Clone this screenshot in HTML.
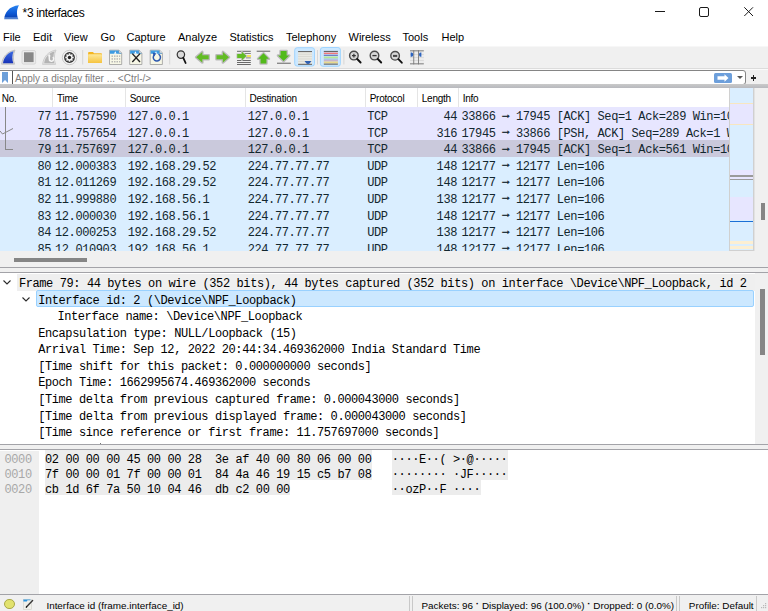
<!DOCTYPE html><html><head><meta charset="utf-8"><style>
*{box-sizing:border-box;margin:0;padding:0}
html,body{width:768px;height:611px;overflow:hidden;background:#fff}
body{position:relative;font-family:"Liberation Sans",sans-serif;color:#000}
.a{position:absolute}
.m{font-family:"Liberation Mono",monospace;font-size:12px;letter-spacing:-0.4px;white-space:pre;position:absolute}
.u{font-family:"Liberation Sans",sans-serif;white-space:pre;position:absolute}
svg{position:absolute;overflow:visible}
</style></head><body>
<svg style="left:4px;top:5px" width="15" height="15" viewBox="0 0 15 15">
<defs><linearGradient id="fin" gradientUnits="userSpaceOnUse" x1="0" y1="0" x2="0" y2="14.3"><stop offset="0" stop-color="#2a86f2"/><stop offset="0.55" stop-color="#0e5ad6"/><stop offset="0.86" stop-color="#0a44b8"/><stop offset="0.88" stop-color="#5a8ad8"/><stop offset="1" stop-color="#4a78c8"/></linearGradient></defs>
<path d="M0.2 14.3 C0.6 7.5 5 1.2 15 0.2 C12.6 4 12.3 9.5 14.4 14.3 Z" fill="url(#fin)"/>
</svg>
<div class="u" style="left:22.6px;top:5.8px;font-size:12px;letter-spacing:-0.38px;line-height:14px">*3 interfaces</div>
<div class="a" style="left:655px;top:11px;width:10px;height:1px;background:#1a1a1a"></div>
<div class="a" style="left:699px;top:7px;width:10px;height:10px;border:1px solid #1a1a1a;border-radius:2px"></div>
<svg style="left:744px;top:7.3px" width="10" height="10" viewBox="0 0 10 10"><path d="M0.3 0.3 L9 9 M9 0.3 L0.3 9" stroke="#1a1a1a" stroke-width="1"/></svg>
<div class="u" style="left:3px;top:30px;font-size:11px;line-height:14px">File</div>
<div class="u" style="left:33px;top:30px;font-size:11px;line-height:14px">Edit</div>
<div class="u" style="left:64px;top:30px;font-size:11px;line-height:14px">View</div>
<div class="u" style="left:100.5px;top:30px;font-size:11px;line-height:14px">Go</div>
<div class="u" style="left:126.5px;top:30px;font-size:11px;line-height:14px">Capture</div>
<div class="u" style="left:178px;top:30px;font-size:11px;line-height:14px">Analyze</div>
<div class="u" style="left:229.5px;top:30px;font-size:11px;line-height:14px">Statistics</div>
<div class="u" style="left:286px;top:30px;font-size:11px;line-height:14px">Telephony</div>
<div class="u" style="left:348.5px;top:30px;font-size:11px;line-height:14px">Wireless</div>
<div class="u" style="left:402.5px;top:30px;font-size:11px;line-height:14px">Tools</div>
<div class="u" style="left:441.5px;top:30px;font-size:11px;line-height:14px">Help</div>
<div class="a" style="left:0;top:46px;width:768px;height:23px;background:#f0f0f0"></div>
<div class="a" style="left:0;top:46px;width:768px;height:1px;background:#f7f7f7"></div>
<div class="a" style="left:0;top:67.8px;width:768px;height:1px;background:#dcdcdc"></div>
<svg style="left:0;top:0" width="430" height="70" viewBox="0 0 430 70">
<defs>
<linearGradient id="tbfin" x1="0" y1="0" x2="0" y2="1"><stop offset="0" stop-color="#3c6be0"/><stop offset="1" stop-color="#1632b8"/></linearGradient>
<linearGradient id="fold" x1="0" y1="0" x2="0" y2="1"><stop offset="0" stop-color="#fde89a"/><stop offset="1" stop-color="#f6c440"/></linearGradient>
</defs>
<!-- start fin -->
<path d="M1.6 64.2 C2.5 57 7 51.5 15 50.1 C13 54.5 12.8 59.5 14.6 64.2 Z" fill="#d8d8d8" stroke="#bdbdbd" stroke-width="0.8"/>
<path d="M3 63.2 C3.8 57.5 7.8 52.5 13.6 51.3 C12 55 11.9 59.5 13.3 63.2 Z" fill="url(#tbfin)"/>
<!-- stop -->
<rect x="22" y="50.5" width="13.6" height="13.6" rx="1.5" fill="#ebebeb" stroke="#d2d2d2" stroke-width="0.8"/>
<rect x="24" y="52.3" width="9.6" height="9.8" fill="#878787"/>
<!-- restart fin -->
<path d="M42.6 64.4 C43.5 57 48 51.5 56 50 C54 54.5 53.8 59.5 55.6 64.4 Z" fill="#e4e4e4" stroke="#c8c8c8" stroke-width="0.8"/>
<path d="M44.2 63.2 C45 57.5 49 52.5 54.6 51.5 C53 55 52.9 59.5 54.3 63.2 Z" fill="#b4b4b4"/>
<path d="M49.3 55.6 L49.3 58.6 A2.2 2.2 0 1 0 52.8 57.2" fill="none" stroke="#f6f6f6" stroke-width="1.5"/>
<path d="M47.8 56.2 L49.3 54 L50.8 56.2 Z" fill="#f6f6f6"/>
<!-- options gear -->
<circle cx="69.5" cy="57.5" r="7.2" fill="#f2f2f2" stroke="#c4c4c4" stroke-width="0.9"/>
<circle cx="69.5" cy="57.5" r="5.4" fill="#353535"/>
<g fill="#f4f4f4">
<circle cx="69.5" cy="57.5" r="3.1"/>
<rect x="68.7" y="53.3" width="1.6" height="8.4"/>
<rect x="65.3" y="56.7" width="8.4" height="1.6"/>
<rect x="68.7" y="53.3" width="1.6" height="8.4" transform="rotate(45 69.5 57.5)"/>
<rect x="68.7" y="53.3" width="1.6" height="8.4" transform="rotate(-45 69.5 57.5)"/>
</g>
<circle cx="69.5" cy="57.5" r="1.7" fill="#222"/>
<!-- separators -->
<rect x="82.2" y="50" width="1" height="14.5" fill="#d6d6d6"/>
<rect x="169.2" y="50" width="1" height="14.5" fill="#d6d6d6"/>
<rect x="317" y="50" width="1" height="14.5" fill="#d6d6d6"/>
<rect x="343.4" y="50" width="1" height="14.5" fill="#d6d6d6"/>
<!-- folder -->
<path d="M88.1 53 Q88.1 52 89 52 L93 52 L94 53.3 L101.2 53.3 Q101.9 53.3 101.9 54 L101.9 62.2 Q101.9 62.9 101.2 62.9 L88.8 62.9 Q88.1 62.9 88.1 62.2 Z" fill="#f4b622"/>
<path d="M88.1 55 Q88.1 54.3 88.8 54.3 L101.2 54.3 Q101.9 54.3 101.9 55 L101.9 62.2 Q101.9 62.9 101.2 62.9 L88.8 62.9 Q88.1 62.9 88.1 62.2 Z" fill="url(#fold)"/>
<!-- doc template -->
<g>
<path d="M109.5 50.2 L119 50.2 L121.7 53 L121.7 64.5 L109.5 64.5 Z" fill="#f7f7e6" stroke="#9a9a9a" stroke-width="0.8"/>
<path d="M109.9 50.6 L118.8 50.6 L121.3 53.1 L121.3 53.8 L109.9 53.8 Z" fill="#3d9ce2"/>
<path d="M114 53.8 L115.3 51.3 L116.5 53.8 Z" fill="#fff"/>
<path d="M119 50.2 L119 53 L121.7 53" fill="#dfe8f0" stroke="#9a9a9a" stroke-width="0.5"/>
</g>
<g fill="#b0b0b0">
<rect x="111.5" y="55.5" width="1.5" height="1.3"/><rect x="114" y="55.5" width="1.5" height="1.3"/><rect x="116.5" y="55.5" width="1.5" height="1.3"/><rect x="119" y="55.5" width="1.2" height="1.3"/>
<rect x="111.5" y="58.3" width="1.5" height="1.3"/><rect x="114" y="58.3" width="1.5" height="1.3"/><rect x="116.5" y="58.3" width="1.5" height="1.3"/><rect x="119" y="58.3" width="1.2" height="1.3"/>
<rect x="111.5" y="61.1" width="1.5" height="1.3"/><rect x="114" y="61.1" width="1.5" height="1.3"/><rect x="116.5" y="61.1" width="1.5" height="1.3"/><rect x="119" y="61.1" width="1.2" height="1.3"/>
</g>
<g transform="translate(20.2 0)">
<path d="M109.5 50.2 L119 50.2 L121.7 53 L121.7 64.5 L109.5 64.5 Z" fill="#f7f7e6" stroke="#9a9a9a" stroke-width="0.8"/>
<path d="M109.9 50.6 L118.8 50.6 L121.3 53.1 L121.3 53.8 L109.9 53.8 Z" fill="#3d9ce2"/>
<path d="M114 53.8 L115.3 51.3 L116.5 53.8 Z" fill="#fff"/>
<path d="M119 50.2 L119 53 L121.7 53" fill="#dfe8f0" stroke="#9a9a9a" stroke-width="0.5"/>
</g>
<path d="M132.3 53.6 L140 62 M140 53.6 L132.3 62" stroke="#222" stroke-width="1.4"/>
<g transform="translate(40.7 0)">
<path d="M109.5 50.2 L119 50.2 L121.7 53 L121.7 64.5 L109.5 64.5 Z" fill="#f7f7e6" stroke="#9a9a9a" stroke-width="0.8"/>
<path d="M109.9 50.6 L118.8 50.6 L121.3 53.1 L121.3 53.8 L109.9 53.8 Z" fill="#3d9ce2"/>
<path d="M114 53.8 L115.3 51.3 L116.5 53.8 Z" fill="#fff"/>
<path d="M119 50.2 L119 53 L121.7 53" fill="#dfe8f0" stroke="#9a9a9a" stroke-width="0.5"/>
</g>
<path d="M158.5 54.2 A3.6 3.6 0 1 1 154.6 54.6" fill="none" stroke="#2b57ae" stroke-width="1.5"/>
<path d="M152.6 52.6 L156.4 53.4 L153.8 56.6 Z" fill="#2b57ae"/>
<!-- find -->
<circle cx="180.9" cy="54.6" r="3.7" fill="#dadada" stroke="#333" stroke-width="1.2"/>
<path d="M183.3 57.8 L185.6 63" stroke="#111" stroke-width="1.8" stroke-linecap="round"/>
<!-- back arrow -->
<path d="M196.2 57.2 L202.3 52 L202.3 55.2 L208.7 55.2 L208.7 59.2 L202.3 59.2 L202.3 62.4 Z" fill="#62bc24" stroke="#bababa" stroke-width="2.6" stroke-linejoin="round" paint-order="stroke"/>
<!-- forward arrow -->
<path d="M229 57.2 L222.9 52 L222.9 55.2 L216.5 55.2 L216.5 59.2 L222.9 59.2 L222.9 62.4 Z" fill="#62bc24" stroke="#bababa" stroke-width="2.6" stroke-linejoin="round" paint-order="stroke"/>
<!-- go to packet -->
<g fill="#6a6a6a">
<rect x="237" y="50.8" width="13.8" height="1"/>
<rect x="244" y="53" width="6.8" height="0.8"/>
<rect x="246" y="57.5" width="4.8" height="0.8"/>
<rect x="237" y="60" width="13.8" height="1"/>
<rect x="237" y="62" width="13.8" height="1"/>
<rect x="237" y="64" width="13.8" height="1"/>
</g>
<rect x="247" y="55.2" width="4" height="1.6" fill="#f3e23a"/>
<path d="M246.5 56 L241.8 51.8 L241.8 54 L237.2 54 L237.2 58 L241.8 58 L241.8 60.2 Z" fill="#62bc24" stroke="#c6c6c6" stroke-width="1.6" stroke-linejoin="round" paint-order="stroke"/>
<!-- first packet -->
<rect x="256.7" y="50.6" width="13.5" height="1.4" fill="#8a8a8a"/>
<path d="M263.5 53.3 L268.9 58.8 L266.4 58.8 L266.4 63.4 L260.6 63.4 L260.6 58.8 L258.1 58.8 Z" fill="#52ba1a" stroke="#bababa" stroke-width="2.6" stroke-linejoin="round" paint-order="stroke"/>
<!-- last packet -->
<path d="M283.6 61.1 L289.2 55.6 L286.6 55.6 L286.6 51 L280.6 51 L280.6 55.6 L278 55.6 Z" fill="#52ba1a" stroke="#bababa" stroke-width="2.6" stroke-linejoin="round" paint-order="stroke"/>
<rect x="277" y="62.6" width="13.8" height="1.4" fill="#8a8a8a"/>
<!-- autoscroll checked -->
<rect x="294.7" y="47.7" width="19.8" height="18.4" rx="2.5" fill="#cce8ff" stroke="#99d1ff" stroke-width="0.9"/>
<rect x="298.1" y="51.5" width="13.9" height="12.9" fill="#e9e9e3"/>
<g fill="#d4d4cc"><rect x="298.1" y="53.8" width="13.9" height="0.7"/><rect x="298.1" y="56.2" width="13.9" height="0.7"/><rect x="298.1" y="58.6" width="13.9" height="0.7"/><rect x="298.1" y="61" width="13.9" height="0.7"/></g>
<rect x="298.1" y="51" width="13.9" height="1.1" fill="#6a6a6a"/>
<rect x="298.1" y="63.8" width="13.9" height="1.1" fill="#6a6a6a"/>
<path d="M304.6 61.3 Q304.6 60.9 305 60.9 L311 60.9 Q311.4 60.9 311.1 61.6 L309.8 63.2 Q309.2 64 308 64 Q306.8 64 306.2 63.2 L304.9 61.6 Z" fill="#2f5fb0"/>
<!-- colorize checked -->
<rect x="320.4" y="47.5" width="20" height="18.8" rx="2.5" fill="#cce8ff" stroke="#99d1ff" stroke-width="0.9"/>
<rect x="323.8" y="50.9" width="14.1" height="1.1" fill="#666"/>
<rect x="323.8" y="52.6" width="14.1" height="1.5" fill="#f07878"/>
<rect x="323.8" y="54.7" width="14.1" height="1.3" fill="#6f80c8"/>
<rect x="323.8" y="56.5" width="14.1" height="2" fill="#b4e896"/>
<rect x="323.8" y="58.5" width="14.1" height="1.4" fill="#a9c2e6"/>
<rect x="323.8" y="59.9" width="14.1" height="1.6" fill="#c8b2cc"/>
<rect x="323.8" y="61.5" width="14.1" height="2" fill="#e8d88c"/>
<rect x="323.8" y="63.6" width="14.1" height="1.1" fill="#666"/>
<!-- zoom in -->
<circle cx="353.9" cy="55.6" r="4.3" fill="#d6d6d6" stroke="#4a4a4a" stroke-width="1.4"/>
<path d="M352 55.6 H355.8 M353.9 53.7 V57.5" stroke="#333" stroke-width="1.2"/>
<path d="M357.2 59 L360.6 62.5" stroke="#111" stroke-width="1.9" stroke-linecap="round"/>
<!-- zoom out -->
<circle cx="374.5" cy="55.6" r="4.3" fill="#d6d6d6" stroke="#4a4a4a" stroke-width="1.4"/>
<path d="M372.4 55.6 H376.6" stroke="#333" stroke-width="1.3"/>
<path d="M377.8 59 L381.2 62.5" stroke="#111" stroke-width="1.9" stroke-linecap="round"/>
<!-- zoom normal -->
<circle cx="395.1" cy="55.8" r="4.3" fill="#d6d6d6" stroke="#4a4a4a" stroke-width="1.4"/>
<rect x="393" y="54.9" width="4.2" height="2" fill="#444"/>
<path d="M398.4 59.2 L401.8 62.7" stroke="#111" stroke-width="1.9" stroke-linecap="round"/>
<!-- resize columns -->
<rect x="410" y="50.6" width="13.8" height="13.5" fill="#ececec"/>
<g fill="#d0d0d0"><rect x="410" y="54" width="13.8" height="0.6"/><rect x="410" y="57" width="13.8" height="0.6"/><rect x="410" y="60" width="13.8" height="0.6"/></g>
<rect x="410" y="50.2" width="13.8" height="1.2" fill="#8e8e8e"/>
<rect x="410" y="63.2" width="13.8" height="1.2" fill="#8e8e8e"/>
<rect x="413.3" y="50.2" width="0.9" height="14.2" fill="#7a7a7a"/>
<rect x="418" y="50.2" width="0.9" height="14.2" fill="#7a7a7a"/>
<path d="M410.6 52.4 L411.6 52.4 Q413.2 52.4 413.2 54.6 Q413.2 56.8 411.6 56.8 L410.6 56.8 Z" fill="#2c64c0"/>
<path d="M421.4 52.4 L420.6 52.4 Q419 52.4 419 54.6 Q419 56.8 420.6 56.8 L421.4 56.8 Z" fill="#2c64c0"/>
</svg>

<div class="a" style="left:0;top:68.8px;width:768px;height:19px;background:#f0f0f0"></div>
<div class="a" style="left:0;top:68.8px;width:768px;height:1px;background:#fafafa"></div>
<div class="a" style="left:-3px;top:70px;width:749px;height:15px;background:#fff;border:1px solid #858585;border-radius:3px"></div>
<div class="a" style="left:2px;top:72px;width:6px;height:11px;background:#6c9fd9;clip-path:polygon(0 0,100% 0,100% 100%,50% 72%,0 100%)"></div>
<div class="a" style="left:12px;top:71px;width:1px;height:14px;background:#555"></div>
<div class="u" style="left:15px;top:72.8px;font-size:10px;line-height:12px;color:#7c7c7c">Apply a display filter ... &lt;Ctrl-/&gt;</div>
<div class="a" style="left:714px;top:73px;width:18px;height:10px;background:#6d9fdb;border-radius:1.5px"></div>
<svg style="left:716px;top:73px" width="14" height="10" viewBox="0 0 14 10"><path d="M1.5 3.3 H8.5 V1.3 L12.5 5 L8.5 8.7 V6.7 H1.5 Z" fill="#fff"/></svg>
<div class="a" style="left:737px;top:76px;width:0;height:0;border-left:3px solid transparent;border-right:3px solid transparent;border-top:3px solid #555"></div>
<div class="a" style="left:750.6px;top:77.2px;width:5.8px;height:1.6px;background:#222"></div>
<div class="a" style="left:752.7px;top:75.1px;width:1.6px;height:5.8px;background:#222"></div>
<div class="a" style="left:0;top:83.7px;width:768px;height:4.3px;background:linear-gradient(#cacaca,#b8b9be)"></div>
<div class="a" style="left:0;top:88px;width:729px;height:163px;background:#fff;overflow:hidden">
<div class="u" style="left:1.7px;top:5.2px;font-size:10px;letter-spacing:-0.25px;line-height:12px">No.</div>
<div class="u" style="left:57px;top:5.2px;font-size:10px;letter-spacing:-0.25px;line-height:12px">Time</div>
<div class="u" style="left:129.7px;top:5.2px;font-size:10px;letter-spacing:-0.25px;line-height:12px">Source</div>
<div class="u" style="left:249.5px;top:5.2px;font-size:10px;letter-spacing:-0.25px;line-height:12px">Destination</div>
<div class="u" style="left:369.7px;top:5.2px;font-size:10px;letter-spacing:-0.25px;line-height:12px">Protocol</div>
<div class="u" style="left:421.8px;top:5.2px;font-size:10px;letter-spacing:-0.25px;line-height:12px">Length</div>
<div class="u" style="left:462.7px;top:5.2px;font-size:10px;letter-spacing:-0.25px;line-height:12px">Info</div>
<div class="a" style="left:52px;top:0;width:1px;height:19px;background:#e5e5e5"></div>
<div class="a" style="left:125px;top:0;width:1px;height:19px;background:#e5e5e5"></div>
<div class="a" style="left:245px;top:0;width:1px;height:19px;background:#e5e5e5"></div>
<div class="a" style="left:365px;top:0;width:1px;height:19px;background:#e5e5e5"></div>
<div class="a" style="left:417px;top:0;width:1px;height:19px;background:#e5e5e5"></div>
<div class="a" style="left:458px;top:0;width:1px;height:19px;background:#e5e5e5"></div>
<div class="a" style="left:0;top:19.10px;width:729px;height:17.07px;background:#e7e6ff"></div>
<div class="m" style="left:37.40px;top:22.10px;line-height:14px;color:#12272e">77</div>
<div class="m" style="left:55.00px;top:22.10px;line-height:14px;color:#12272e">11.757590</div>
<div class="m" style="left:127.70px;top:22.10px;line-height:14px;color:#12272e">127.0.0.1</div>
<div class="m" style="left:247.70px;top:22.10px;line-height:14px;color:#12272e">127.0.0.1</div>
<div class="m" style="left:367.20px;top:22.10px;line-height:14px;color:#12272e">TCP</div>
<div class="m" style="left:443.40px;top:22.10px;line-height:14px;color:#12272e">44</div>
<div class="m" style="left:461.50px;top:22.10px;line-height:14px;color:#12272e">33866 <span style="position:relative;top:-2.5px;-webkit-text-stroke:0.35px currentColor">→</span> 17945 [ACK] Seq=1 Ack=289 Win=10233 Len=0</div>
<div class="a" style="left:0;top:35.67px;width:729px;height:17.07px;background:#e7e6ff"></div>
<div class="m" style="left:37.40px;top:38.67px;line-height:14px;color:#12272e">78</div>
<div class="m" style="left:55.00px;top:38.67px;line-height:14px;color:#12272e">11.757654</div>
<div class="m" style="left:127.70px;top:38.67px;line-height:14px;color:#12272e">127.0.0.1</div>
<div class="m" style="left:247.70px;top:38.67px;line-height:14px;color:#12272e">127.0.0.1</div>
<div class="m" style="left:367.20px;top:38.67px;line-height:14px;color:#12272e">TCP</div>
<div class="m" style="left:436.60px;top:38.67px;line-height:14px;color:#12272e">316</div>
<div class="m" style="left:461.50px;top:38.67px;line-height:14px;color:#12272e">17945 <span style="position:relative;top:-2.5px;-webkit-text-stroke:0.35px currentColor">→</span> 33866 [PSH, ACK] Seq=289 Ack=1 Win=10233 Len=272</div>
<div class="a" style="left:0;top:52.24px;width:729px;height:17.07px;background:#cac9dc"></div>
<div class="m" style="left:37.40px;top:55.24px;line-height:14px;color:#12272e">79</div>
<div class="m" style="left:55.00px;top:55.24px;line-height:14px;color:#12272e">11.757697</div>
<div class="m" style="left:127.70px;top:55.24px;line-height:14px;color:#12272e">127.0.0.1</div>
<div class="m" style="left:247.70px;top:55.24px;line-height:14px;color:#12272e">127.0.0.1</div>
<div class="m" style="left:367.20px;top:55.24px;line-height:14px;color:#12272e">TCP</div>
<div class="m" style="left:443.40px;top:55.24px;line-height:14px;color:#12272e">44</div>
<div class="m" style="left:461.50px;top:55.24px;line-height:14px;color:#12272e">33866 <span style="position:relative;top:-2.5px;-webkit-text-stroke:0.35px currentColor">→</span> 17945 [ACK] Seq=1 Ack=561 Win=10229 Len=0</div>
<div class="a" style="left:0;top:68.81px;width:729px;height:17.07px;background:#daeeff"></div>
<div class="m" style="left:37.40px;top:71.81px;line-height:14px;color:#12272e">80</div>
<div class="m" style="left:55.00px;top:71.81px;line-height:14px;color:#12272e">12.000383</div>
<div class="m" style="left:127.70px;top:71.81px;line-height:14px;color:#12272e">192.168.29.52</div>
<div class="m" style="left:247.70px;top:71.81px;line-height:14px;color:#12272e">224.77.77.77</div>
<div class="m" style="left:367.20px;top:71.81px;line-height:14px;color:#12272e">UDP</div>
<div class="m" style="left:436.60px;top:71.81px;line-height:14px;color:#12272e">148</div>
<div class="m" style="left:461.50px;top:71.81px;line-height:14px;color:#12272e">12177 <span style="position:relative;top:-2.5px;-webkit-text-stroke:0.35px currentColor">→</span> 12177 Len=106</div>
<div class="a" style="left:0;top:85.38px;width:729px;height:17.07px;background:#daeeff"></div>
<div class="m" style="left:37.40px;top:88.38px;line-height:14px;color:#12272e">81</div>
<div class="m" style="left:55.00px;top:88.38px;line-height:14px;color:#12272e">12.011269</div>
<div class="m" style="left:127.70px;top:88.38px;line-height:14px;color:#12272e">192.168.29.52</div>
<div class="m" style="left:247.70px;top:88.38px;line-height:14px;color:#12272e">224.77.77.77</div>
<div class="m" style="left:367.20px;top:88.38px;line-height:14px;color:#12272e">UDP</div>
<div class="m" style="left:436.60px;top:88.38px;line-height:14px;color:#12272e">148</div>
<div class="m" style="left:461.50px;top:88.38px;line-height:14px;color:#12272e">12177 <span style="position:relative;top:-2.5px;-webkit-text-stroke:0.35px currentColor">→</span> 12177 Len=106</div>
<div class="a" style="left:0;top:101.95px;width:729px;height:17.07px;background:#daeeff"></div>
<div class="m" style="left:37.40px;top:104.95px;line-height:14px;color:#12272e">82</div>
<div class="m" style="left:55.00px;top:104.95px;line-height:14px;color:#12272e">11.999880</div>
<div class="m" style="left:127.70px;top:104.95px;line-height:14px;color:#12272e">192.168.56.1</div>
<div class="m" style="left:247.70px;top:104.95px;line-height:14px;color:#12272e">224.77.77.77</div>
<div class="m" style="left:367.20px;top:104.95px;line-height:14px;color:#12272e">UDP</div>
<div class="m" style="left:436.60px;top:104.95px;line-height:14px;color:#12272e">138</div>
<div class="m" style="left:461.50px;top:104.95px;line-height:14px;color:#12272e">12177 <span style="position:relative;top:-2.5px;-webkit-text-stroke:0.35px currentColor">→</span> 12177 Len=106</div>
<div class="a" style="left:0;top:118.52px;width:729px;height:17.07px;background:#daeeff"></div>
<div class="m" style="left:37.40px;top:121.52px;line-height:14px;color:#12272e">83</div>
<div class="m" style="left:55.00px;top:121.52px;line-height:14px;color:#12272e">12.000030</div>
<div class="m" style="left:127.70px;top:121.52px;line-height:14px;color:#12272e">192.168.56.1</div>
<div class="m" style="left:247.70px;top:121.52px;line-height:14px;color:#12272e">224.77.77.77</div>
<div class="m" style="left:367.20px;top:121.52px;line-height:14px;color:#12272e">UDP</div>
<div class="m" style="left:436.60px;top:121.52px;line-height:14px;color:#12272e">148</div>
<div class="m" style="left:461.50px;top:121.52px;line-height:14px;color:#12272e">12177 <span style="position:relative;top:-2.5px;-webkit-text-stroke:0.35px currentColor">→</span> 12177 Len=106</div>
<div class="a" style="left:0;top:135.09px;width:729px;height:17.07px;background:#daeeff"></div>
<div class="m" style="left:37.40px;top:138.09px;line-height:14px;color:#12272e">84</div>
<div class="m" style="left:55.00px;top:138.09px;line-height:14px;color:#12272e">12.000253</div>
<div class="m" style="left:127.70px;top:138.09px;line-height:14px;color:#12272e">192.168.29.52</div>
<div class="m" style="left:247.70px;top:138.09px;line-height:14px;color:#12272e">224.77.77.77</div>
<div class="m" style="left:367.20px;top:138.09px;line-height:14px;color:#12272e">UDP</div>
<div class="m" style="left:436.60px;top:138.09px;line-height:14px;color:#12272e">138</div>
<div class="m" style="left:461.50px;top:138.09px;line-height:14px;color:#12272e">12177 <span style="position:relative;top:-2.5px;-webkit-text-stroke:0.35px currentColor">→</span> 12177 Len=106</div>
<div class="a" style="left:0;top:151.66px;width:729px;height:17.07px;background:#daeeff"></div>
<div class="m" style="left:37.40px;top:154.66px;line-height:14px;color:#12272e">85</div>
<div class="m" style="left:55.00px;top:154.66px;line-height:14px;color:#12272e">12.010903</div>
<div class="m" style="left:127.70px;top:154.66px;line-height:14px;color:#12272e">192.168.56.1</div>
<div class="m" style="left:247.70px;top:154.66px;line-height:14px;color:#12272e">224.77.77.77</div>
<div class="m" style="left:367.20px;top:154.66px;line-height:14px;color:#12272e">UDP</div>
<div class="m" style="left:436.60px;top:154.66px;line-height:14px;color:#12272e">148</div>
<div class="m" style="left:461.50px;top:154.66px;line-height:14px;color:#12272e">12177 <span style="position:relative;top:-2.5px;-webkit-text-stroke:0.35px currentColor">→</span> 12177 Len=106</div>
<div class="a" style="left:5px;top:19px;width:1px;height:42px;background:#888"></div>
<div class="a" style="left:5px;top:60.5px;width:8px;height:1px;background:#888"></div>
<svg style="left:0;top:40px" width="14" height="8" viewBox="0 0 14 8"><path d="M0 3 L2.5 6 L13 0.5" stroke="#888" stroke-width="1" fill="none"/></svg>
</div>
<div class="a" style="left:729px;top:88px;width:25px;height:163px;background:#daeeff;border-left:1px solid #d0d0d0;border-right:1px solid #d0d0d0;border-bottom:1px solid #d0d0d0;overflow:hidden">
<div class="a" style="left:0;top:15px;width:25px;height:1px;background:#f8e6c0"></div>
<div class="a" style="left:0;top:16px;width:25px;height:19.5px;background:#e7e6ff"></div>
<div class="a" style="left:0;top:35.5px;width:25px;height:1px;background:#f8e6c0"></div>
<div class="a" style="left:0;top:82px;width:25px;height:6px;background:#e7e6ff"></div>
<div class="a" style="left:0;top:87px;width:25px;height:1.5px;background:#9a9a9a"></div>
<div class="a" style="left:0;top:88.5px;width:25px;height:2px;background:#e7e6ff"></div>
<div class="a" style="left:0;top:90.5px;width:25px;height:1.5px;background:#9a9a9a"></div>
<div class="a" style="left:0;top:108.5px;width:25px;height:23px;background:#e7e6ff"></div>
<div class="a" style="left:0;top:132.6px;width:25px;height:1.8px;background:#1a6fd6"></div>
<div class="a" style="left:0;top:153px;width:25px;height:3px;background:#fcefd2"></div>
<div class="a" style="left:0;top:158px;width:25px;height:3px;background:#fcefd2"></div>
</div>
<div class="a" style="left:754px;top:88px;width:14px;height:163px;background:#f0f0f0;border-left:1px solid #e2e2e2"></div>
<div class="a" style="left:760.5px;top:203.2px;width:4.4px;height:16.7px;background:#858585"></div>
<div class="a" style="left:0;top:251px;width:768px;height:16px;background:#f0f0f0"></div>
<div class="a" style="left:13.5px;top:257.7px;width:73.2px;height:3.9px;background:#858585"></div>
<div class="a" style="left:0;top:266.8px;width:768px;height:1.2px;background:#a3a3a8"></div>
<div class="a" style="left:0;top:268px;width:768px;height:4px;background:#f0f0f0"></div>
<div class="a" style="left:0;top:272px;width:768px;height:1.2px;background:#a3a3a8"></div>
<div class="a" style="left:0;top:273.2px;width:755px;height:171px;background:#fff;overflow:hidden">
<div class="a" style="left:16.7px;top:1.10px;width:738.3px;height:16.57px;background:#efefef"></div>
<svg style="left:2.80px;top:7.30px" width="8" height="5" viewBox="0 0 8 5"><path d="M0.5 0.5 L4 4 L7.5 0.5" stroke="#2a2a2a" stroke-width="1.1" fill="none"/></svg>
<div class="m" style="left:18.90px;top:3.80px;line-height:14px;color:#000">Frame 79: 44 bytes on wire (352 bits), 44 bytes captured (352 bits) on interface \Device\NPF_Loopback, id 2</div>
<div class="a" style="left:35.7px;top:16.67px;width:718.5px;height:17.37px;background:#cce8ff;border:1px solid #99d1ff;border-radius:2px"></div>
<svg style="left:22.05px;top:23.87px" width="8" height="5" viewBox="0 0 8 5"><path d="M0.5 0.5 L4 4 L7.5 0.5" stroke="#2a2a2a" stroke-width="1.1" fill="none"/></svg>
<div class="m" style="left:38.15px;top:20.37px;line-height:14px;color:#000">Interface id: 2 (\Device\NPF_Loopback)</div>
<div class="m" style="left:57.40px;top:36.94px;line-height:14px;color:#000">Interface name: \Device\NPF_Loopback</div>
<div class="m" style="left:38.15px;top:53.51px;line-height:14px;color:#000">Encapsulation type: NULL/Loopback (15)</div>
<div class="m" style="left:38.15px;top:70.08px;line-height:14px;color:#000">Arrival Time: Sep 12, 2022 20:44:34.469362000 India Standard Time</div>
<div class="m" style="left:38.15px;top:86.65px;line-height:14px;color:#000">[Time shift for this packet: 0.000000000 seconds]</div>
<div class="m" style="left:38.15px;top:103.22px;line-height:14px;color:#000">Epoch Time: 1662995674.469362000 seconds</div>
<div class="m" style="left:38.15px;top:119.79px;line-height:14px;color:#000">[Time delta from previous captured frame: 0.000043000 seconds]</div>
<div class="m" style="left:38.15px;top:136.36px;line-height:14px;color:#000">[Time delta from previous displayed frame: 0.000043000 seconds]</div>
<div class="m" style="left:38.15px;top:152.93px;line-height:14px;color:#000">[Time since reference or first frame: 11.757697000 seconds]</div>
<div class="m" style="left:38.15px;top:169.50px;line-height:14px;color:#000">Frame Number: 79</div>
</div>
<div class="a" style="left:99.8px;top:443px;width:1.2px;height:1px;background:#777"></div>
<div class="a" style="left:755px;top:273.2px;width:13px;height:171px;background:#f0f0f0"></div>
<div class="a" style="left:760px;top:289px;width:5.3px;height:66px;background:#858585"></div>
<div class="a" style="left:0;top:444px;width:768px;height:1.2px;background:#a3a3a8"></div>
<div class="a" style="left:0;top:445.2px;width:768px;height:3.8px;background:#f0f0f0"></div>
<div class="a" style="left:0;top:449px;width:768px;height:1.2px;background:#a3a3a8"></div>
<div class="a" style="left:0;top:450.2px;width:768px;height:143.5px;background:#fff"></div>
<div class="a" style="left:0;top:451px;width:38.6px;height:142.7px;background:#efefef"></div>
<div class="a" style="left:45.2px;top:450.40px;width:326.90px;height:14.75px;background:#ececec"></div>
<div class="a" style="left:392.3px;top:450.40px;width:116.10px;height:14.75px;background:#ececec"></div>
<div class="m" style="left:4.5px;top:452.60px;line-height:14px;color:#a8a8a8">0000</div>
<div class="m" style="left:45px;top:452.60px;line-height:14px;color:#000">02 00 00 00 45 00 00 28  3e af 40 00 80 06 00 00</div>
<div class="m" style="left:391.8px;top:452.60px;line-height:14px;color:#000">····E··( >·@·····</div>
<div class="a" style="left:45.2px;top:465.10px;width:326.90px;height:14.75px;background:#ececec"></div>
<div class="a" style="left:392.3px;top:465.10px;width:116.10px;height:14.75px;background:#ececec"></div>
<div class="m" style="left:4.5px;top:467.65px;line-height:14px;color:#a8a8a8">0010</div>
<div class="m" style="left:45px;top:467.65px;line-height:14px;color:#000">7f 00 00 01 7f 00 00 01  84 4a 46 19 15 c5 b7 08</div>
<div class="m" style="left:391.8px;top:467.65px;line-height:14px;color:#000">········ ·JF·····</div>
<div class="a" style="left:45.2px;top:479.80px;width:245.30px;height:14.75px;background:#ececec"></div>
<div class="a" style="left:392.3px;top:479.80px;width:88.90px;height:14.75px;background:#ececec"></div>
<div class="m" style="left:4.5px;top:482.70px;line-height:14px;color:#a8a8a8">0020</div>
<div class="m" style="left:45px;top:482.70px;line-height:14px;color:#000">cb 1d 6f 7a 50 10 04 46  db c2 00 00</div>
<div class="m" style="left:391.8px;top:482.70px;line-height:14px;color:#000">··ozP··F ····</div>
<div class="a" style="left:0;top:593.7px;width:768px;height:1.5px;background:#a3a3a8"></div>
<div class="a" style="left:0;top:595.2px;width:768px;height:16px;background:#f0f0f0"></div>
<div class="a" style="left:4.3px;top:598.6px;width:10.9px;height:10.9px;border-radius:50%;background:#e2e26e;border:1px solid #a9a948"></div>
<svg style="left:23px;top:598.8px" width="11" height="11" viewBox="0 0 11 11">
<rect x="0.4" y="0.6" width="8.2" height="10" fill="#efefea" stroke="#d0d0c8" stroke-width="0.6"/>
<path d="M0.4 0.4 H7.5 V1.2 L4.5 1.2 L3.8 2.6 L0.4 2.6 Z" fill="#2d95e0"/>
<path d="M3.6 7.8 L9.6 1.4" stroke="#3a3a3a" stroke-width="1.4" stroke-linecap="round"/>
<path d="M3 8.6 L3.9 7.3" stroke="#111" stroke-width="1.2"/>
</svg>
<div class="u" style="left:46.4px;top:599.6px;font-size:9.9px;line-height:12px">Interface id (frame.interface_id)</div>
<div class="a" style="left:409.3px;top:596px;width:1px;height:15px;background:#c8c8c8"></div>
<div class="a" style="left:411.9px;top:596px;width:1px;height:15px;background:#c8c8c8"></div>
<div class="a" style="left:676.4px;top:596px;width:1px;height:15px;background:#c8c8c8"></div>
<div class="a" style="left:679.2px;top:596px;width:1px;height:15px;background:#c8c8c8"></div>
<div class="a" style="left:755.8px;top:596px;width:1px;height:15px;background:#c8c8c8"></div>
<div class="u" style="left:421.5px;top:599.6px;font-size:9.9px;line-height:12px">Packets: 96 <span style="position:relative;top:-2px;font-weight:bold">·</span> Displayed: 96 (100.0%) <span style="position:relative;top:-2px;font-weight:bold">·</span> Dropped: 0 (0.0%)</div>
<div class="u" style="left:688.8px;top:599.6px;font-size:9.9px;line-height:12px">Profile: Default</div>
<svg style="left:758px;top:601px" width="10" height="10" viewBox="0 0 10 10"><g fill="#b8b8b8"><rect x="7" y="2" width="1.2" height="1.2"/><rect x="5" y="4" width="1.2" height="1.2"/><rect x="7" y="4" width="1.2" height="1.2"/><rect x="3" y="6" width="1.2" height="1.2"/><rect x="5" y="6" width="1.2" height="1.2"/><rect x="7" y="6" width="1.2" height="1.2"/></g></svg>
</body></html>
